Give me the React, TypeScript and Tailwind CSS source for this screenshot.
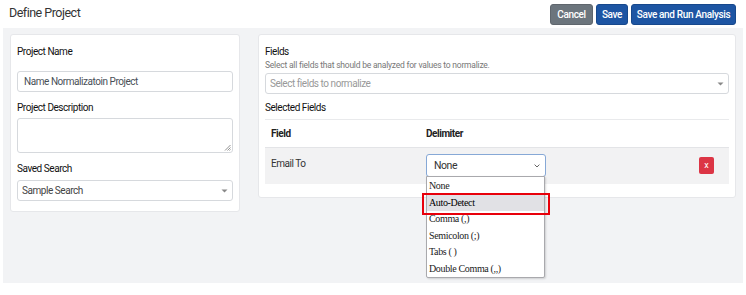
import React from 'react'

const font = { fontFamily: 'Roboto, "Liberation Sans", sans-serif' }

function Caret() {
  return (
    <svg width="7" height="4" viewBox="0 0 7 4" className="shrink-0">
      <path d="M0.5 0.5 L6.5 0.5 L3.5 3.5 Z" fill="#888" />
    </svg>
  )
}

const options = ['None', 'Auto-Detect', 'Comma (,)', 'Semicolon (;)', 'Tabs ( )', 'Double Comma (,,)']

export default function App() {
  return (
    <div className="relative w-[746px] h-[295px] bg-white text-[#333]" style={font}>
      {/* header */}
      <div className="h-[28px] flex items-center justify-between pl-[9px] pr-[10px]">
        <div className="text-[12.5px] tracking-[-0.5px] text-[#333] -mt-[2px]">Define Project</div>
        <div className="flex gap-[3px] pt-[1px]">
          <button className="h-[21px] w-[43px] rounded-[3px] bg-[#6c757d] border border-[#5f666d] text-white text-[10px] tracking-[-0.35px] font-medium">Cancel</button>
          <button className="h-[21px] w-[32px] rounded-[3px] bg-[#1d55a3] border border-[#17488c] text-white text-[10px] tracking-[-0.35px] font-medium">Save</button>
          <button className="h-[21px] w-[105px] rounded-[3px] bg-[#1d55a3] border border-[#17488c] text-white text-[10px] tracking-[-0.35px] font-medium">Save and Run Analysis</button>
        </div>
      </div>

      {/* body */}
      <div className="mx-[3px] h-[255px] bg-[#f2f3f5] pt-[6px] px-[7px] flex items-start gap-[18px] text-[10px] tracking-[-0.45px]">
        {/* left card */}
        <div className="w-[230px] h-[178px] bg-white rounded-[3px] border border-[#e6e7ea] px-[6px] pt-[10px]">
          <div className="leading-[14px] text-[#111]">Project Name</div>
          <div className="mt-[12px] h-[21px] border border-[#d6d9dd] rounded-[3px] flex items-center pl-[6px] text-[#495057]">
            Name Normalizatoin Project
          </div>
          <div className="mt-[9px] leading-[14px] text-[#111]">Project Description</div>
          <div className="relative mt-[3px] h-[35px] border border-[#d6d9dd] rounded-[3px]">
            <svg width="7" height="7" viewBox="0 0 7 7" className="absolute right-[1px] bottom-[1px]">
              <path d="M6.5 1 L1 6.5 M6.5 3.5 L3.5 6.5 M6.5 5.5 L5.5 6.5" stroke="#777" strokeWidth="0.8" />
            </svg>
          </div>
          <div className="mt-[9px] leading-[14px] text-[#111]">Saved Search</div>
          <div className="mt-[4px] h-[21px] border border-[#d6d9dd] rounded-[3px] flex items-center justify-between pl-[4px] pr-[4px] text-[#444]">
            <span>Sample Search</span>
            <Caret />
          </div>
        </div>

        {/* right card */}
        <div className="relative w-[478px] h-[164px] bg-white rounded-[3px] border border-[#e6e7ea] px-[6px] pt-[10px]">
          <div className="leading-[14px] text-[#111]">Fields</div>
          <div className="text-[8.5px] tracking-[-0.22px] leading-[12px] text-[#777]">Select all fields that should be analyzed for values to normalize.</div>
          <div className="mt-[2px] h-[21px] border border-[#d6d9dd] rounded-[3px] flex items-center justify-between pl-[4px] pr-[4px] text-[#999]">
            <span>Select fields to normalize</span>
            <Caret />
          </div>
          <div className="mt-[7px] leading-[14px] text-[#111]">Selected Fields</div>
          <div className="mt-[4px] border-t border-[#e9eaec]" />
          <div className="h-[28px] flex items-center font-bold text-[#222] border-b border-[#e3e4e7]">
            <div className="w-[161px] pl-[6px]">Field</div>
            <div>Delimiter</div>
          </div>
          <div className="h-[36px] bg-[#f2f2f3] flex items-start text-[#333]">
            <div className="w-[161px] pl-[6px] pt-[8px]">Email To</div>
            <div className="pt-[6px] w-[120px]">
              <div className="h-[23px] border border-[#86a8d6] rounded-[3px] bg-white flex items-center justify-between pl-[7px] pr-[5px] text-[10.5px] text-[#333]">
                <span>None</span>
                <svg width="6" height="4" viewBox="0 0 6 4">
                  <path d="M0.6 0.6 L3 3 L5.4 0.6" stroke="#555" strokeWidth="0.9" fill="none" />
                </svg>
              </div>
            </div>
            <div className="ml-auto mr-[15px] mt-[9px] w-[15px] h-[17px] rounded-[2px] bg-[#dc3545] flex items-center justify-center text-white text-[9px] tracking-normal leading-none">
              x
            </div>
          </div>
        </div>
      </div>

      {/* open dropdown list */}
      <div
        className="absolute left-[426px] top-[176px] w-[119px] h-[102px] bg-white border border-[#a9a9ad] rounded-b-[2px] shadow-[1px_1px_2px_rgba(0,0,0,0.15)] pt-[1px] text-[10px] tracking-[-0.35px] text-[#222]"
        style={{ fontFamily: '"Liberation Serif", "Times New Roman", serif' }}
      >
        {options.map((o, i) => (
          <div key={o} className={`h-[16.5px] leading-[16.5px] pl-[2px] ${i === 1 ? 'bg-[#e1e1e5] text-black' : ''}`}>
            {o}
          </div>
        ))}
      </div>

      {/* highlight box */}
      <div className="absolute left-[422px] top-[193px] w-[128px] h-[22px] border-2 border-[#e8000b]" />
    </div>
  )
}
